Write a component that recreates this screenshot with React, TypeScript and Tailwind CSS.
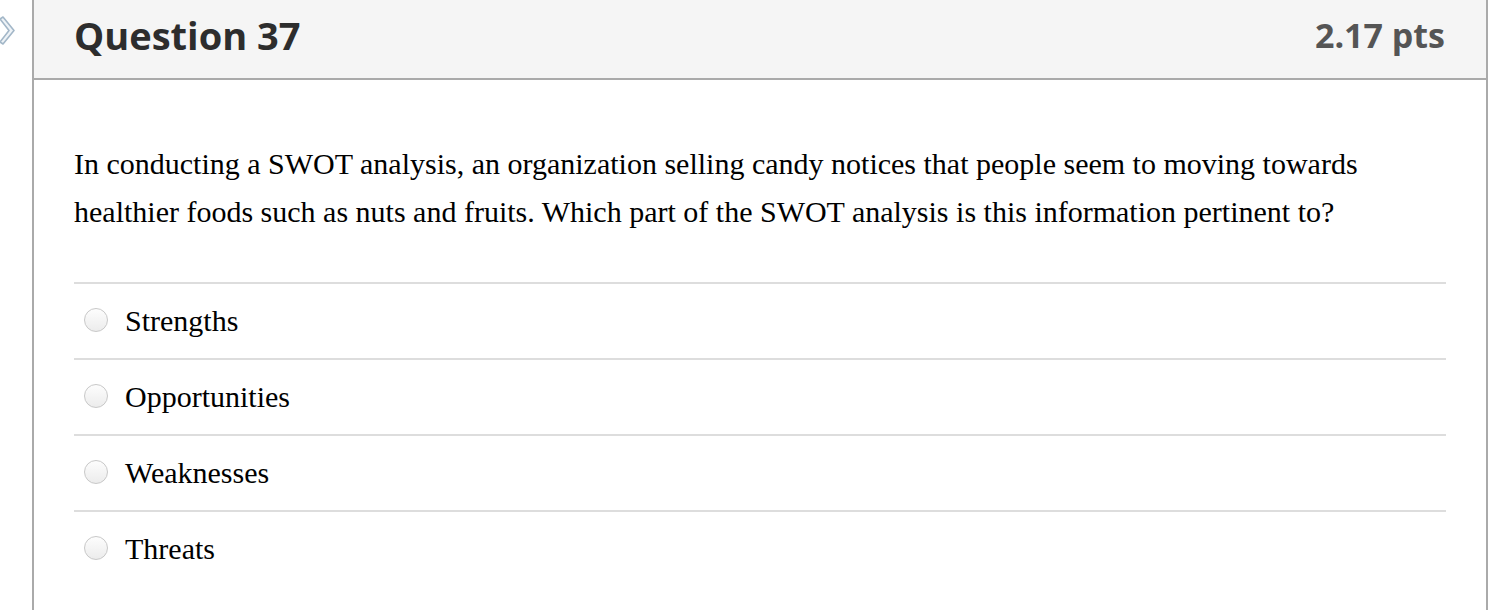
const options = ['Strengths', 'Opportunities', 'Weaknesses', 'Threats'];

function Chevron() {
  return (
    <svg width="16" height="30" viewBox="1 0 16 30" className="block">
      <path d="M1 3 L4 1 L15 14.5 L4 28 L1 26 L10 14.5 Z" fill="#eef3f7" stroke="#a3b7c8" strokeWidth="1.6" strokeLinejoin="round" />
    </svg>
  );
}

function Radio() {
  return (
    <span className="block w-[24px] h-[24px] shrink-0 rounded-full border border-[#c8c8c8] bg-gradient-to-b from-[#fdfdfd] to-[#ececec]" />
  );
}

export default function App() {
  return (
    <div className="w-[1500px] h-[610px] bg-white overflow-hidden flex">
      <div className="w-[32px] shrink-0 pt-[16px]">
        <Chevron />
      </div>
      <div className="w-[1456px] h-[640px] border-x-2 border-[#aaaaaa]">
        <div className="h-[80px] bg-[#f5f5f5] border-b-2 border-[#aaaaaa] flex items-center justify-between pl-[40px] pr-[41px] pb-[8px] font-['Open_Sans',sans-serif] font-bold">
          <span className="text-[#2d2d2d] text-[38px]">Question 37</span>
          <span className="text-[#555555] text-[34px]">2.17 pts</span>
        </div>
        <div className="pl-[40px] pr-[40px] pt-[60px] font-['Liberation_Serif',serif] text-black">
          <p className="text-[30px] leading-[48px]">
            In conducting a SWOT analysis, an organization selling candy notices that people seem to moving towards healthier foods such as nuts and fruits. Which part of the SWOT analysis is this information pertinent to?
          </p>
          <div className="mt-[46px]">
            {options.map((o) => (
              <div key={o} className="h-[76px] border-t-2 border-[#dddddd] flex items-center pl-[10px] gap-[17px] pb-[2px]">
                <Radio />
                <span className="text-[30px]">{o}</span>
              </div>
            ))}
          </div>
        </div>
      </div>
    </div>
  );
}
